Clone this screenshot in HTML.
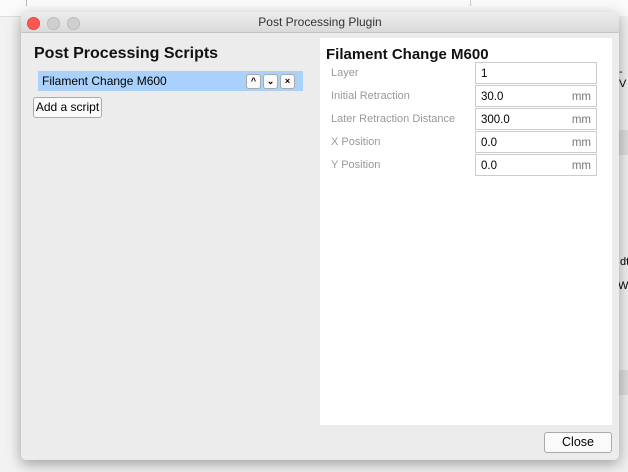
<!DOCTYPE html>
<html><head><style>
body{margin:0;width:628px;height:472px;background:#f2f2f2;font-family:"Liberation Sans",sans-serif;position:relative;overflow:hidden}
.a{position:absolute}
.win{left:21px;top:12px;width:598px;height:448px;background:#ececec;border-radius:5px;box-shadow:0 4px 14px rgba(0,0,0,.35);overflow:hidden}
.tb{left:0;top:0;width:598px;height:20px;background:linear-gradient(#ececec,#dadada);border-bottom:1px solid #c4c4c4;text-align:center;font-size:12px;line-height:20px;color:#333}
.dot{width:11px;height:11px;border-radius:50%;top:5px;background:#cfcfcf;border:0.5px solid #bbb}
.in{border:1px solid #ccc;background:#fff;width:122px;height:22px;left:475px;font-size:11.5px;line-height:22px;box-sizing:border-box;padding-left:5px}
.in span{position:absolute;right:5px;color:#777}
.lb{left:331px;font-size:11px;color:#999}
.btn{border:1px solid #aaa;border-radius:3px;background:#fafafa;box-sizing:border-box;font-size:12px;text-align:center}
.sb{width:15px;height:15px;top:74px;font-size:9px;line-height:13px;font-weight:bold}
</style></head><body>
<div class="a" style="left:0;top:0;width:628px;height:16px;background:#fafafa;border-bottom:1px solid #ddd"></div>
<div class="a" style="left:26px;top:0;width:1px;height:6px;background:#bbb"></div>
<div class="a" style="left:470px;top:0;width:1px;height:6px;background:#ccc"></div>
<div class="a" style="left:619px;top:16px;width:9px;height:456px;background:#f0f0f0"></div>
<div class="a" style="left:619px;top:130px;width:9px;height:25px;background:#ddd"></div>
<div class="a" style="left:619px;top:370px;width:9px;height:25px;background:#ddd"></div>
<div class="a" style="left:619px;top:66px;font-size:11px">-V</div>
<div class="a" style="left:620px;top:256px;font-size:11px">dt</div>
<div class="a" style="left:618px;top:280px;font-size:11px">Wi</div>
<div class="a win">
 <div class="a tb">Post Processing Plugin</div>
 <div class="a dot" style="left:6px;background:#fc5753;border-color:#df4744"></div>
 <div class="a dot" style="left:26px"></div>
 <div class="a dot" style="left:46px"></div>
</div>
<div class="a" style="left:34px;top:45px;font-size:16px;font-weight:bold;color:#111">Post Processing Scripts</div>
<div class="a" style="left:38px;top:71px;width:265px;height:20px;background:#a9d1fb"></div>
<div class="a" style="left:42px;top:74px;font-size:12px">Filament Change M600</div>
<div class="a btn sb" style="left:246px">^</div>
<div class="a btn sb" style="left:263px">⌄</div>
<div class="a btn sb" style="left:280px">×</div>
<div class="a btn" style="left:33px;top:97px;width:69px;height:21px;line-height:19px">Add a script</div>
<div class="a" style="left:320px;top:38px;width:292px;height:387px;background:#fff"></div>
<div class="a" style="left:326px;top:46px;font-size:15px;font-weight:bold;color:#111">Filament Change M600</div>
<div class="a lb" style="top:67px">Layer</div>
<div class="a lb" style="top:90px">Initial Retraction</div>
<div class="a lb" style="top:113px">Later Retraction Distance</div>
<div class="a lb" style="top:136px">X Position</div>
<div class="a lb" style="top:159px">Y Position</div>
<div class="a in" style="top:62px">1</div>
<div class="a in" style="top:85px">30.0<span>mm</span></div>
<div class="a in" style="top:108px">300.0<span>mm</span></div>
<div class="a in" style="top:131px">0.0<span>mm</span></div>
<div class="a in" style="top:154px">0.0<span>mm</span></div>
<div class="a btn" style="left:544px;top:432px;width:68px;height:21px;line-height:19px;font-size:12.5px">Close</div>
</body></html>
